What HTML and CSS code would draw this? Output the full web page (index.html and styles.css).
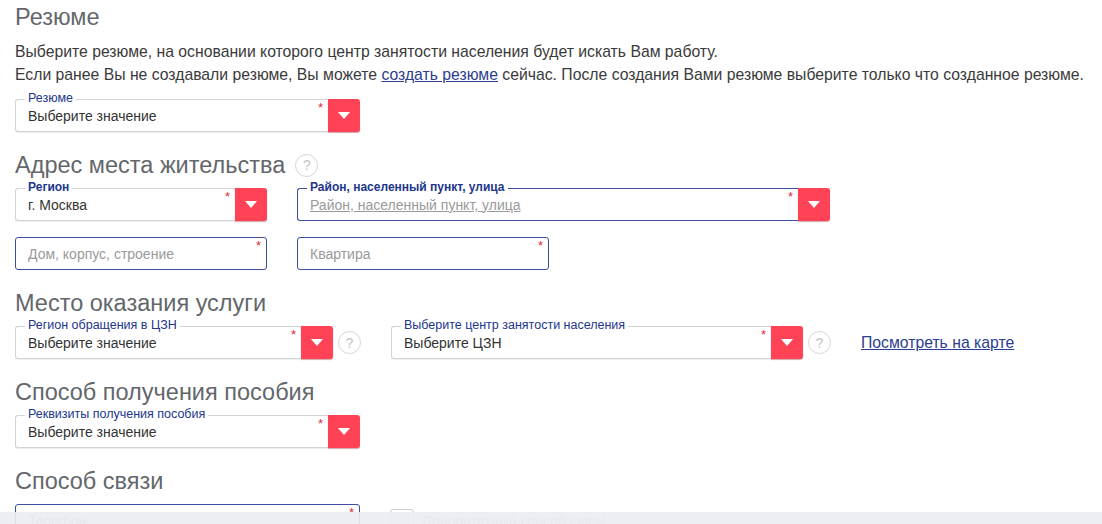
FILE: index.html
```html
<!doctype html>
<html lang="ru">
<head>
    <meta charset="UTF-8">
    <meta name="viewport" content="width=device-width, initial-scale=1.0">
    <title>Заявление</title>
    <link rel="stylesheet" href="styles.css">
</head>
<body>
<div class="page">
    <h2 class="title first">Резюме</h2>
    <p class="hint">Выберите резюме, на основании которого центр занятости населения будет искать Вам работу.<br>
        Если ранее Вы не создавали резюме, Вы можете <a href="#">создать резюме</a> сейчас. После создания Вами резюме выберите только что созданное резюме.</p>
    <div class="row">
        <div class="field w345">
            <span class="label">Резюме</span>
            <div class="box"><span class="value">Выберите значение</span><i class="req">*</i></div>
            <div class="btn"><i class="arrow"></i></div>
        </div>
    </div>

    <h2 class="title">Адрес места жительства <span class="help">?</span></h2>
    <div class="row">
        <div class="field w252">
            <span class="label bold">Регион</span>
            <div class="box"><span class="value">г. Москва</span><i class="req">*</i></div>
            <div class="btn"><i class="arrow"></i></div>
        </div>
        <div class="field w533 active">
            <span class="label bold">Район, населенный пункт, улица</span>
            <div class="box"><span class="value placeholder under">Район, населенный пункт, улица</span><i class="req">*</i></div>
            <div class="btn"><i class="arrow"></i></div>
        </div>
    </div>
    <div class="row second">
        <div class="field w252 active">
            <div class="box full"><span class="value placeholder">Дом, корпус, строение</span><i class="req">*</i></div>
        </div>
        <div class="field w252 active">
            <div class="box full"><span class="value placeholder">Квартира</span><i class="req">*</i></div>
        </div>
    </div>

    <h2 class="title">Место оказания услуги</h2>
    <div class="row">
        <div class="with-help">
            <div class="field w318">
                <span class="label">Регион обращения в ЦЗН</span>
                <div class="box"><span class="value">Выберите значение</span><i class="req">*</i></div>
                <div class="btn"><i class="arrow"></i></div>
            </div>
            <span class="help">?</span>
        </div>
        <div class="with-help">
            <div class="field w412">
                <span class="label">Выберите центр занятости населения</span>
                <div class="box"><span class="value">Выберите ЦЗН</span><i class="req">*</i></div>
                <div class="btn"><i class="arrow"></i></div>
            </div>
            <span class="help">?</span>
        </div>
        <a class="map-link" href="#">Посмотреть на карте</a>
    </div>

    <h2 class="title">Способ получения пособия</h2>
    <div class="row">
        <div class="field w345">
            <span class="label">Реквизиты получения пособия</span>
            <div class="box"><span class="value">Выберите значение</span><i class="req">*</i></div>
            <div class="btn"><i class="arrow"></i></div>
        </div>
    </div>

    <h2 class="title">Способ связи</h2>
    <div class="row">
        <div class="field w345 active">
            <div class="box full"><span class="value placeholder">Телефон</span><i class="req">*</i></div>
        </div>
        <label class="check"><span class="check-box"></span>Приоритетный способ связи</label>
    </div>
</div>
<div class="footer-bar"></div>
</body>
</html>
```

FILE: styles.css
```css
body{ margin: 0; font-family: "Liberation Sans", Arial, sans-serif; color: #333; background: #fff; }
.page{ padding: 4px 15px 40px; }

.title{ margin: 20px 0 10px; font-size: 23.5px; line-height: 26px; font-weight: normal; color: #63676b; display: flex; align-items: center; }
.title.first{ margin-top: 0; }
.hint{ margin: 8px 0 13px; font-size: 15.75px; line-height: 23px; color: #3a3a3a; }
.hint a{ color: #2b3e8f; }

.row{ display: flex; align-items: center; gap: 30px; }
.row.second{ margin-top: 16px; }

.field{ position: relative; display: flex; height: 33px; box-sizing: border-box; }
.w345{ width: 345px; }
.w252{ width: 252px; }
.w533{ width: 533px; }
.w318{ width: 318px; }
.w412{ width: 412px; }

.box{ position: relative; flex: 1; display: flex; align-items: center; border: 1px solid #d3d3d3; border-right: none; border-radius: 3px 0 0 3px; box-shadow: 0 1px 1px rgba(0,0,0,.07); padding-left: 12px; }
.box.full{ border-right: 1px solid #d3d3d3; border-radius: 3px; }
.active .box, .active .box.full{ border-color: #3c4f9f; box-shadow: none; }

.value{ font-size: 14px; color: #333; }
.placeholder{ color: #9a9a9a; }
.under{ text-decoration: underline; }

.req{ position: absolute; top: 1px; right: 5px; font-style: normal; font-size: 13px; line-height: 13px; color: #d92b3d; }

.label{ position: absolute; left: 10px; top: -8px; padding: 0 3px; background: #fff; font-size: 12.5px; line-height: 14px; color: #21358c; z-index: 1; }
.label.bold{ font-size: 12px; font-weight: bold; }

.btn{ width: 32px; background: #ff4255; border-radius: 0 3px 3px 0; box-shadow: 0 1px 1px rgba(120,0,10,.35); display: flex; align-items: center; justify-content: center; }
.arrow{ width: 0; height: 0; border-left: 6px solid transparent; border-right: 6px solid transparent; border-top: 7px solid #fff; }

.help{ display: inline-flex; align-items: center; justify-content: center; width: 21px; height: 21px; border: 1px solid #d6d6d6; border-radius: 50%; font-size: 14px; color: #c4c4c4; margin-left: 10px; }
.with-help{ display: flex; align-items: center; }
.with-help .help{ margin-left: 5px; }

.map-link{ font-size: 15.75px; color: #2b3e8f; }

.check{ display: flex; align-items: center; gap: 8px; font-size: 14px; color: #aaa; }
.check-box{ width: 22px; height: 22px; border: 1px solid #ccc; border-radius: 3px; }

.footer-bar{ position: fixed; left: 0; right: 0; bottom: 0; height: 12px; background: rgba(236,237,243,.92); }
```
